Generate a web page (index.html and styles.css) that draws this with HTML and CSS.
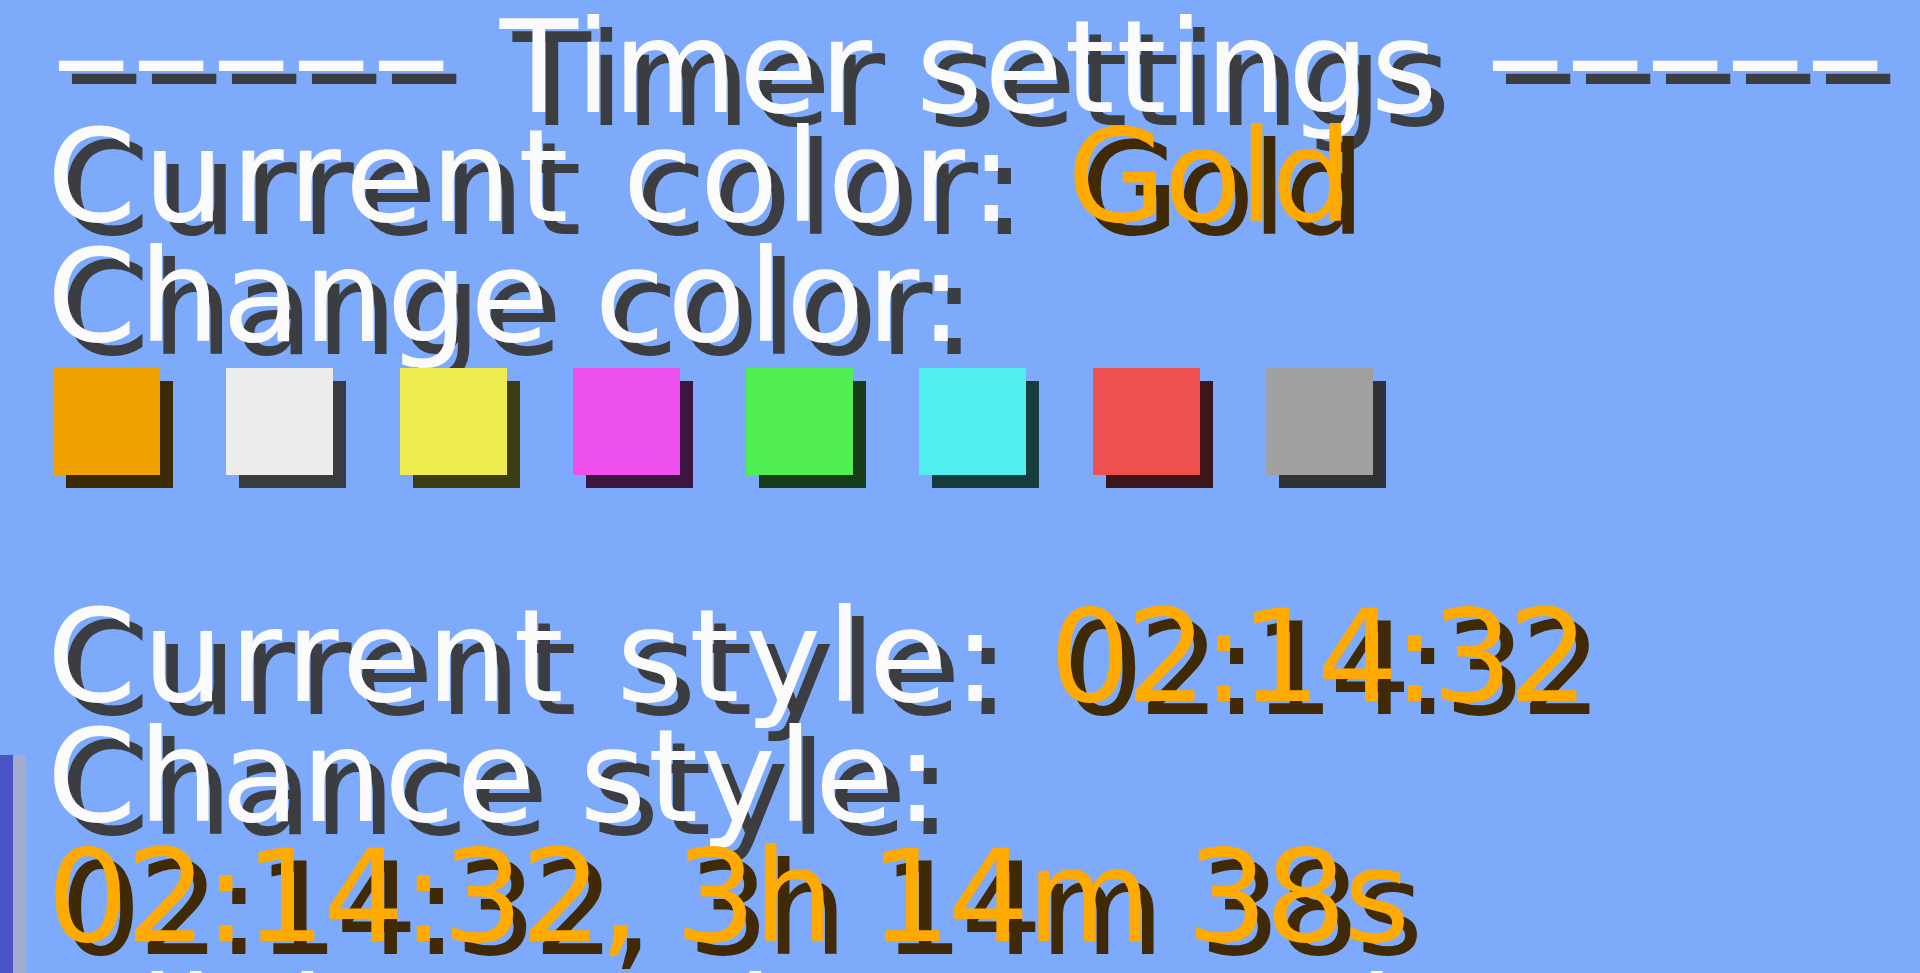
FILE: index.html
```html
<!DOCTYPE html>
<html lang="en">
<head>
  <meta charset="UTF-8" />
  <meta name="viewport" content="width=device-width, initial-scale=1" />
  <title>Timer settings</title>
  <link rel="stylesheet" href="styles.css">
</head>
<body>

  <div class="chat">
    <p class="line title"><span class="dash">-----</span> Timer settings <span class="dash">-----</span></p>
    <p class="line cur-color">Current color: <span class="gold name">Gold</span></p>
    <p class="line chg-color">Change color:</p>

    <!-- color picker, one square per chat color -->
    <div class="swatches">
      <div class="swatch gold-sw" title="Gold"></div>
      <div class="swatch white-sw" title="White"></div>
      <div class="swatch yellow-sw" title="Yellow"></div>
      <div class="swatch pink-sw" title="Light purple"></div>
      <div class="swatch green-sw" title="Green"></div>
      <div class="swatch aqua-sw" title="Aqua"></div>
      <div class="swatch red-sw" title="Red"></div>
      <div class="swatch gray-sw" title="Gray"></div>
    </div>

    <p class="line"></p>
    <p class="line cur-style">Current style: <span class="gold clock">02:14:32</span></p>
    <p class="line chg-style">Chance style:</p>
    <p class="line styles gold">02:14:32, 3h 14m 38s</p>
    <p class="line hint">Click a style to use it</p>
  </div>

  <div class="scrollbar"></div>

</body>
</html>
```

FILE: styles.css
```css
body {
  margin: 0;
  height: 100vh;
  overflow: hidden;
  background: #7eaafb;
  font-family: 'DejaVu Sans', Verdana, sans-serif;
}

.chat {
  margin-top: -3px;
  padding-left: 47px;
  font-size: 128px;
  color: #fbfbfb;
  text-shadow: 13px 13px 0 #3c3d41;
}

.line {
  margin: 0;
  height: 120px;
  line-height: 120px;
  white-space: pre;
}

.gold {
  color: #ffaa00;
  text-shadow: 13px 13px 0 #3f2a05;
}

/* hyphens stretched out to the chat font's long dashes */
.dash {
  display: inline-block;
  letter-spacing: -4.3px;
  transform: scaleX(1.91);
  transform-origin: left center;
  margin-right: 201px;
  vertical-align: 11px;
  text-shadow: 6.8px 13px 0 #3c3d41;
}

.title { letter-spacing: 1.6px; }
.cur-color { letter-spacing: 6.8px; }
.cur-color .name { letter-spacing: -3px; }
.chg-color { letter-spacing: 2.4px; }
.cur-style { letter-spacing: 6px; }
.cur-style .clock { letter-spacing: -5px; }
.chg-style { letter-spacing: 1.8px; }
.styles { letter-spacing: -2.85px; }
.hint { letter-spacing: 3px; margin-top: 8px; }

.swatches {
  display: flex;
  gap: 66.3px;
  height: 120px;
  box-sizing: border-box;
  padding: 11px 0 0 6px;
}

.swatch {
  width: 107px;
  height: 107px;
  flex-shrink: 0;
}

.gold-sw   { background: #f0a200; box-shadow: 13px 13px 0 #3b2a06; }
.white-sw  { background: #ececec; box-shadow: 13px 13px 0 #3a3b3f; }
.yellow-sw { background: #eeee50; box-shadow: 13px 13px 0 #3c3c16; }
.pink-sw   { background: #ee50ee; box-shadow: 13px 13px 0 #3c163e; }
.green-sw  { background: #50ee50; box-shadow: 13px 13px 0 #163c18; }
.aqua-sw   { background: #50eeee; box-shadow: 13px 13px 0 #163c3e; }
.red-sw    { background: #ee5050; box-shadow: 13px 13px 0 #3c1618; }
.gray-sw   { background: #a0a0a0; box-shadow: 13px 13px 0 #303236; }

.scrollbar {
  position: fixed;
  left: 0;
  top: 755px;
  bottom: 0;
  width: 13px;
  background: #4b54c6;
  border-right: 13px solid #a4aacb;
}
```
